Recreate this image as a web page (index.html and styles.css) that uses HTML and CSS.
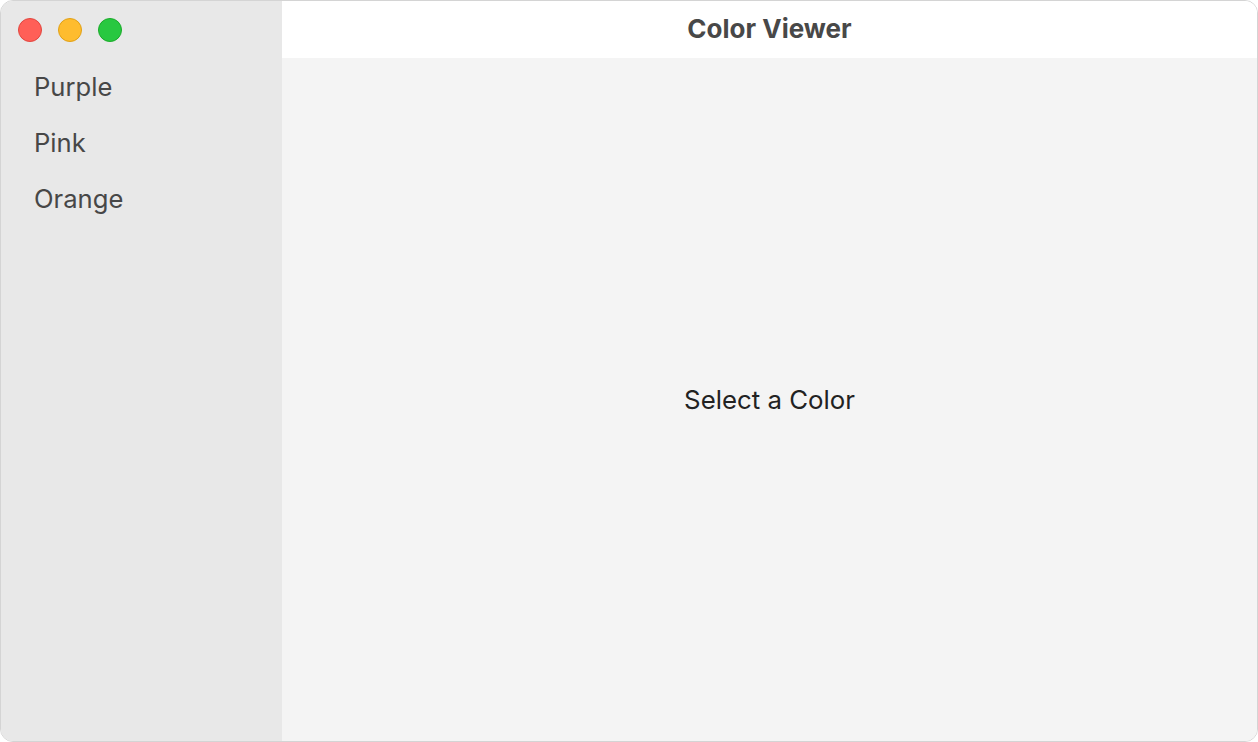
FILE: index.html
```html
<!DOCTYPE html>
<html>
<head>
<meta charset="utf-8">
<link rel="stylesheet" href="styles.css">
</head>
<body>
<div class="window">
  <aside class="sidebar">
    <div class="lights">
      <span class="light red"></span>
      <span class="light yellow"></span>
      <span class="light green"></span>
    </div>
    <ul class="list">
      <li>Purple</li>
      <li>Pink</li>
      <li>Orange</li>
    </ul>
  </aside>
  <main class="main">
    <header class="titlebar">Color Viewer</header>
    <section class="content">Select a Color</section>
  </main>
</div>
</body>
</html>
```
FILE: styles.css
```css
html, body {
  margin: 0;
  padding: 0;
  background: #ffffff;
}
body {
  width: 1258px;
  height: 742px;
  font-family: Inter, "Noto Sans", "Liberation Sans", sans-serif;
}
.window {
  box-sizing: border-box;
  width: 1258px;
  height: 742px;
  border: 1px solid #d4d4d4;
  border-radius: 13px;
  overflow: hidden;
  display: flex;
}
.sidebar {
  width: 281px;
  flex: none;
  background: #e8e8e8;
  display: flex;
  flex-direction: column;
}
.lights {
  display: flex;
  gap: 16px;
  padding: 17px 0 0 17px;
  height: 24px;
}
.light {
  width: 22px;
  height: 22px;
  border-radius: 50%;
  border: 1px solid;
}
.red { background: #ff5f57; border-color: #e2463f; }
.yellow { background: #febc2e; border-color: #e1a116; }
.green { background: #28c840; border-color: #1aab29; }
.list {
  list-style: none;
  margin: 0;
  padding: 17px 0 0 33px;
  display: flex;
  flex-direction: column;
  gap: 0;
}
.list li {
  font-size: 25.6px;
  line-height: 56px;
  color: #474747;
}
.main {
  flex: 1;
  display: flex;
  flex-direction: column;
}
.titlebar {
  height: 57px;
  box-sizing: border-box;
  padding-bottom: 2px;
  background: #ffffff;
  display: flex;
  align-items: center;
  justify-content: center;
  font-weight: 700;
  font-size: 26px;
  color: #484848;
}
.content {
  flex: 1;
  background: #f4f4f4;
  display: flex;
  align-items: center;
  justify-content: center;
  font-size: 25.8px;
  color: #222222;
}
```
